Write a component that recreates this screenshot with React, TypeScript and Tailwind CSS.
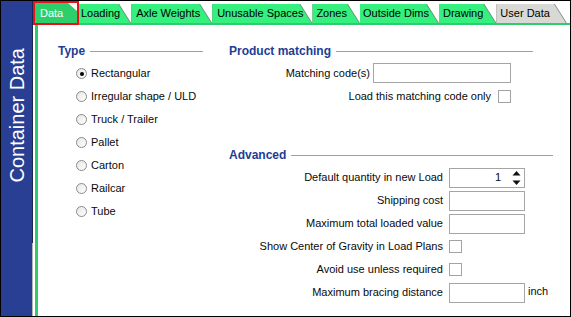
import React from "react";

const FONT = { fontFamily: '"Liberation Sans", Arial, sans-serif' };

type Tab = { label: string; pl: string; pr: string; gray?: boolean };

const TABS: Tab[] = [
  { label: "Loading", pl: "pl-[2px]", pr: "pr-[11px]" },
  { label: "Axle Weights", pl: "pl-[5px]", pr: "pr-[12px]" },
  { label: "Unusable Spaces", pl: "pl-[5px]", pr: "pr-[9px]" },
  { label: "Zones", pl: "pl-[4px]", pr: "pr-[13px]" },
  { label: "Outside Dims", pl: "pl-[3px]", pr: "pr-[10px]" },
  { label: "Drawing", pl: "pl-[4px]", pr: "pr-[13px]" },
  { label: "User Data", pl: "pl-[4px]", pr: "pr-[17px]", gray: true },
];

const RADIOS = [
  "Rectangular",
  "Irregular shape / ULD",
  "Truck / Trailer",
  "Pallet",
  "Carton",
  "Railcar",
  "Tube",
];

const FolderTab = ({ tab }: { tab: Tab }) => (
  <div
    className={`relative h-[19px] flex items-center ${tab.pl} ${tab.pr} ${
      tab.gray ? "bg-[#8a8a8a]" : "bg-[#6f8f78]"
    } [clip-path:polygon(0_0,calc(100%-12px)_0,100%_100%,0_100%)]`}
  >
    <span
      className={`absolute inset-0 ${
        tab.gray ? "bg-[#d8d8d4]" : "bg-[#35ef7f]"
      } [clip-path:polygon(0_0,calc(100%-13px)_0,calc(100%-1px)_100%,0_100%)]`}
    />
    <span className="relative text-[11px] leading-none text-black">{tab.label}</span>
  </div>
);

const Heading = ({ text, width }: { text: string; width: string }) => (
  <div className={`flex items-center h-[14px] ${width}`}>
    <span className="text-[12px] font-bold leading-none text-[#1d3d96]">{text}</span>
    <div className="flex-1 h-px bg-[#a0a0a0] ml-[5px]" />
  </div>
);

const Checkbox = () => (
  <div className="w-[13px] h-[13px] border border-[#a3a3a3] bg-white" />
);

const TextBox = ({ w, children }: { w: string; children?: React.ReactNode }) => (
  <div className={`${w} h-[20px] border border-[#a5a5a5] bg-white flex items-center justify-end`}>
    {children}
  </div>
);

const Spinner = () => (
  <svg width="9" height="16" viewBox="0 0 9 16" className="ml-[11px] mr-[3px]">
    <path d="M4.5 1 L8.5 5.5 L0.5 5.5 Z" fill="#111" />
    <path d="M0.5 10.5 L8.5 10.5 L4.5 15 Z" fill="#111" />
  </svg>
);

const AdvRow = ({ label, children, suffix }: { label: string; children: React.ReactNode; suffix?: string }) => (
  <div className="flex items-center h-[23px]">
    <span className="w-[214px] text-right text-[11px] text-[#0a0a0a]">{label}</span>
    <div className="ml-[6px]">{children}</div>
    {suffix && <span className="ml-[3px] text-[11px] text-[#0a0a0a] -mt-[3px]">{suffix}</span>}
  </div>
);

export default function App() {
  return (
    <div className="w-[571px] h-[317px] border border-black flex bg-white overflow-hidden" style={FONT}>
      {/* side caption */}
      <div className="w-[31px] bg-[#293f94] flex justify-center pt-[47px]">
        <span className="[writing-mode:vertical-rl] rotate-180 text-[20px] leading-none text-white h-fit">
          Container Data
        </span>
      </div>
      <div className="w-px flex flex-col">
        <div className="h-[242px] bg-[#1a2458]" />
        <div className="flex-1 bg-[#b4b4b4]" />
      </div>

      <div className="flex-1 flex flex-col min-w-0">
        {/* tabs */}
        <div className="h-[22px] flex items-end relative z-10">
          <div className="h-[24px] w-[46px] border-2 border-[#e8101a] -mb-[2px] bg-white">
            <div className="h-full flex items-center pl-[5px] bg-[#2dcf6b] [clip-path:polygon(0_0,calc(100%-9px)_0,100%_8px,100%_100%,0_100%)]">
              <span className="text-[11px] leading-none text-white">Data</span>
            </div>
          </div>
          {TABS.map((t) => (
            <FolderTab key={t.label} tab={t} />
          ))}
        </div>

        {/* pane */}
        <div className="flex-1 ml-[2px] border-t-2 border-l-[3px] border-[#2ecc6d] flex pt-[19px] pl-[20px]">
          <div className="w-[145px] flex flex-col">
            <Heading text="Type" width="w-[145px]" />
            <div className="mt-[4px] flex flex-col">
              {RADIOS.map((r, i) => (
                <div key={r} className="h-[23px] flex items-center pl-[18px]">
                  <div className="w-[11px] h-[11px] rounded-full border border-[#8a8a8a] bg-gradient-to-br from-[#e6e6e6] to-white flex items-center justify-center">
                    {i === 0 && <div className="w-[4px] h-[4px] rounded-full bg-black" />}
                  </div>
                  <span className="ml-[4px] text-[11px] text-[#0a0a0a]">{r}</span>
                </div>
              ))}
            </div>
          </div>

          <div className="ml-[26px] w-[324px] flex flex-col">
            <Heading text="Product matching" width="w-[304px]" />
            <div className="mt-[5px] w-[282px] h-[20px] flex items-center justify-end">
              <span className="text-[11px] text-[#0a0a0a]">Matching code(s)</span>
              <div className="ml-[3px]">
                <TextBox w="w-[138px]" />
              </div>
            </div>
            <div className="mt-[7px] w-[282px] h-[13px] flex items-center justify-end">
              <span className="text-[11px] text-[#0a0a0a]">Load this matching code only</span>
              <div className="ml-[7px]">
                <Checkbox />
              </div>
            </div>

            <div className="mt-[45px]">
              <Heading text="Advanced" width="w-[324px]" />
            </div>
            <div className="mt-[4px] flex flex-col">
              <AdvRow label="Default quantity in new Load">
                <TextBox w="w-[76px]">
                  <span className="text-[11px] text-[#0a0a0a]">1</span>
                  <Spinner />
                </TextBox>
              </AdvRow>
              <AdvRow label="Shipping cost">
                <TextBox w="w-[76px]" />
              </AdvRow>
              <AdvRow label="Maximum total loaded value">
                <TextBox w="w-[76px]" />
              </AdvRow>
              <AdvRow label="Show Center of Gravity in Load Plans">
                <Checkbox />
              </AdvRow>
              <AdvRow label="Avoid use unless required">
                <Checkbox />
              </AdvRow>
              <AdvRow label="Maximum bracing distance" suffix="inch">
                <TextBox w="w-[76px]" />
              </AdvRow>
            </div>
          </div>
        </div>
      </div>
    </div>
  );
}
